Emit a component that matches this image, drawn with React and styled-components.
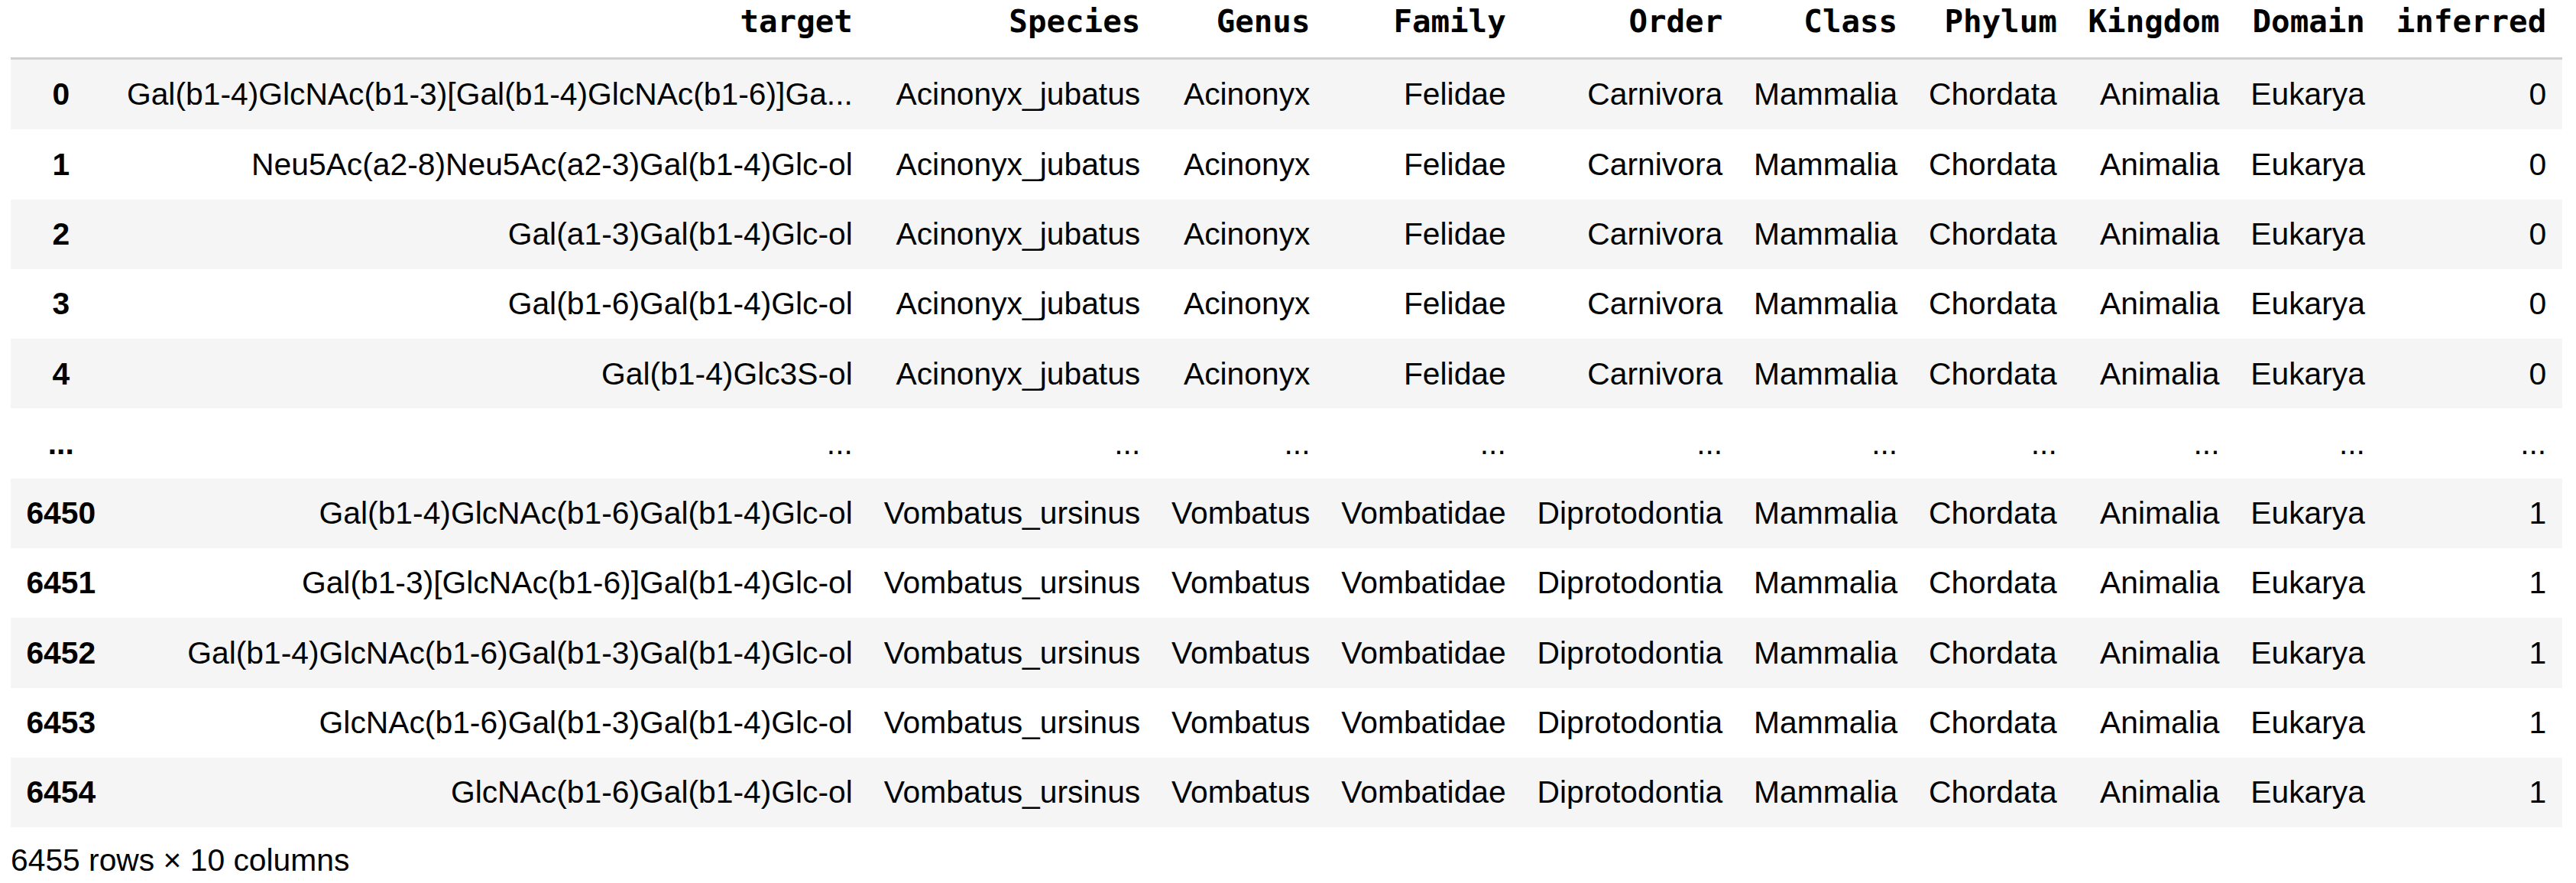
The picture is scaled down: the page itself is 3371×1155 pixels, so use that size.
import React from 'react';
import styled, { createGlobalStyle } from 'styled-components';

const GlobalStyle = createGlobalStyle`
  html, body { margin: 0; padding: 0; background: #ffffff; }
  body {
    font-family: "Liberation Sans", Arial, Helvetica, sans-serif;
    color: #000000;
  }
`;

const Output = styled.div`
  padding-left: 14px;
  font-size: 40.8px;
`;

const Table = styled.table`
  border-collapse: collapse;
  border-spacing: 0;
  font-size: inherit;
  color: #000000;
`;

const HeadRow = styled.tr`
  border-bottom: 3px solid #d0d0d0;
`;

const HeadCell = styled.th`
  font-family: "DejaVu Sans Mono", "Liberation Mono", monospace;
  font-weight: bold;
  text-align: right;
  white-space: nowrap;
  line-height: 50px;
  padding: 3px 20.4px 22px;
`;

const BodyRow = styled.tr`
  background: ${(p) => (p.$striped ? '#f5f5f5' : '#ffffff')};
`;

const IndexCell = styled.th`
  font-family: "Liberation Sans", Arial, sans-serif;
  font-weight: bold;
  text-align: center;
  white-space: nowrap;
  line-height: 50.5px;
  padding: 20.4px;
`;

const Cell = styled.td`
  text-align: right;
  white-space: nowrap;
  line-height: 50.5px;
  padding: 20.4px;
`;

const Footer = styled.p`
  margin: 20px 0 0;
  font-size: inherit;
  line-height: 47px;
`;

const columns = ['target', 'Species', 'Genus', 'Family', 'Order', 'Class', 'Phylum', 'Kingdom', 'Domain', 'inferred'];

const cheetah = ['Acinonyx_jubatus', 'Acinonyx', 'Felidae', 'Carnivora', 'Mammalia', 'Chordata', 'Animalia', 'Eukarya', '0'];
const wombat = ['Vombatus_ursinus', 'Vombatus', 'Vombatidae', 'Diprotodontia', 'Mammalia', 'Chordata', 'Animalia', 'Eukarya', '1'];

const rows = [
  ['0', 'Gal(b1-4)GlcNAc(b1-3)[Gal(b1-4)GlcNAc(b1-6)]Ga...', ...cheetah],
  ['1', 'Neu5Ac(a2-8)Neu5Ac(a2-3)Gal(b1-4)Glc-ol', ...cheetah],
  ['2', 'Gal(a1-3)Gal(b1-4)Glc-ol', ...cheetah],
  ['3', 'Gal(b1-6)Gal(b1-4)Glc-ol', ...cheetah],
  ['4', 'Gal(b1-4)Glc3S-ol', ...cheetah],
  ['...', '...', '...', '...', '...', '...', '...', '...', '...', '...', '...'],
  ['6450', 'Gal(b1-4)GlcNAc(b1-6)Gal(b1-4)Glc-ol', ...wombat],
  ['6451', 'Gal(b1-3)[GlcNAc(b1-6)]Gal(b1-4)Glc-ol', ...wombat],
  ['6452', 'Gal(b1-4)GlcNAc(b1-6)Gal(b1-3)Gal(b1-4)Glc-ol', ...wombat],
  ['6453', 'GlcNAc(b1-6)Gal(b1-3)Gal(b1-4)Glc-ol', ...wombat],
  ['6454', 'GlcNAc(b1-6)Gal(b1-4)Glc-ol', ...wombat],
];

export default function App() {
  return (
    <>
      <GlobalStyle />
      <Output>
        <Table>
          <thead>
            <HeadRow>
              <HeadCell />
              {columns.map((c) => (
                <HeadCell key={c}>{c}</HeadCell>
              ))}
            </HeadRow>
          </thead>
          <tbody>
            {rows.map((r, i) => (
              <BodyRow key={r[0] + i} $striped={i % 2 === 0}>
                <IndexCell>{r[0]}</IndexCell>
                {r.slice(1).map((v, j) => (
                  <Cell key={j}>{v}</Cell>
                ))}
              </BodyRow>
            ))}
          </tbody>
        </Table>
        <Footer>6455 rows × 10 columns</Footer>
      </Output>
    </>
  );
}
